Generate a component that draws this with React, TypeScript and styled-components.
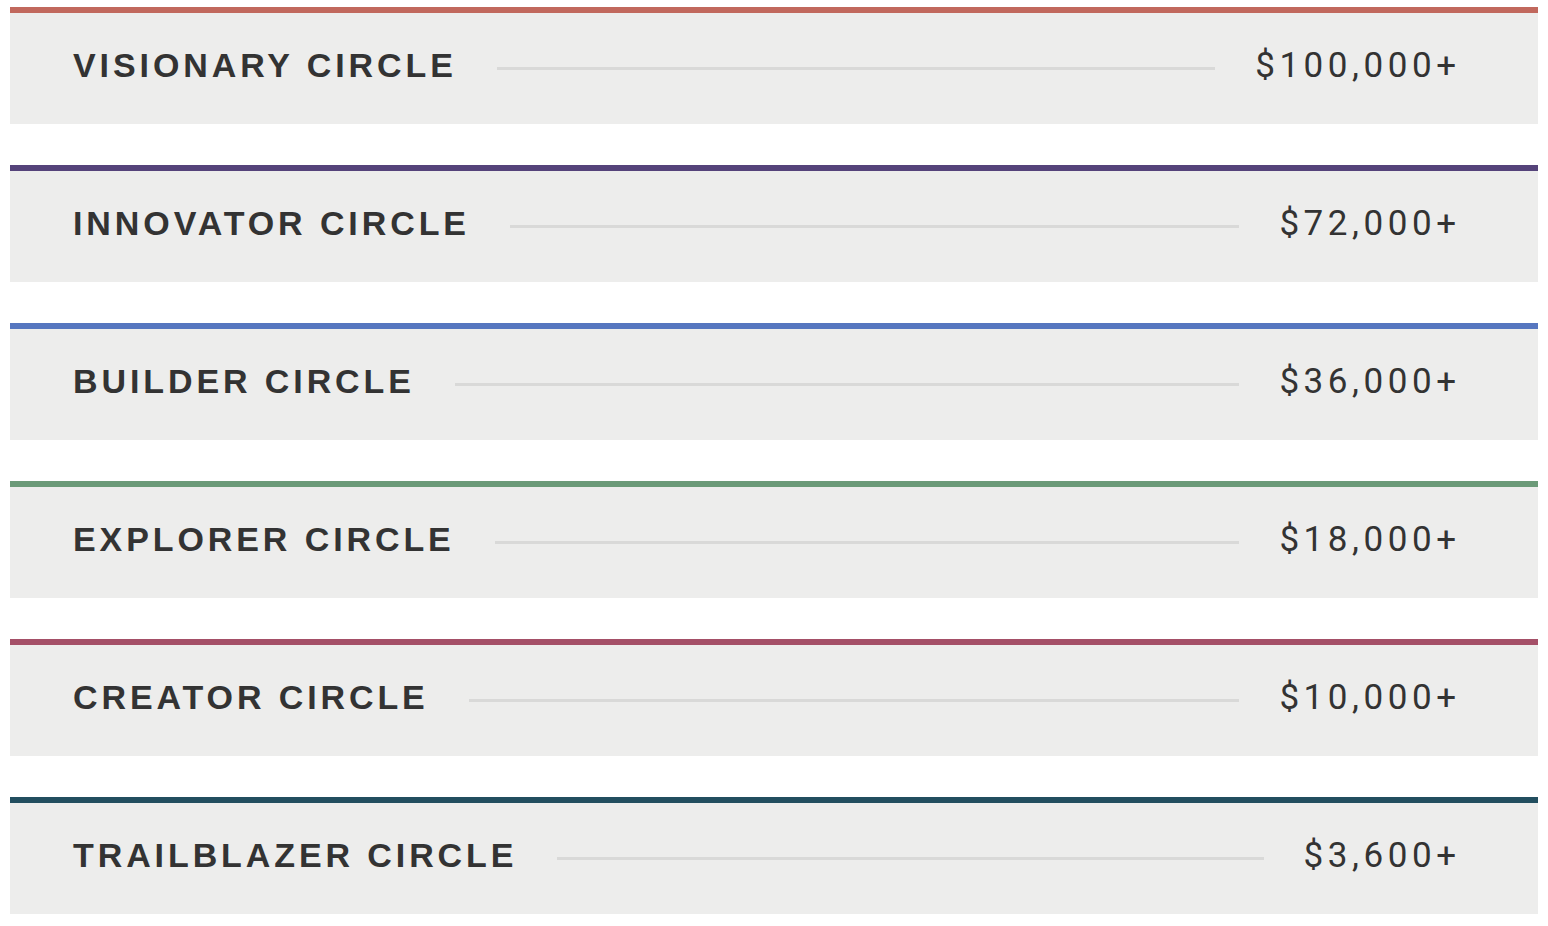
import React from 'react';
import styled, { createGlobalStyle } from 'styled-components';

const GlobalStyle = createGlobalStyle`
    body {
        margin: 0;
        background: #ffffff;
    }
`;

const List = styled.section`
    display: flex;
    flex-direction: column;
    gap: 41px;
    padding: 7px 10px 0;
`;

const Tier = styled.div<{ $accent: string }>`
    display: flex;
    align-items: center;
    box-sizing: border-box;
    height: 117px;
    padding: 0 82px 6px 63px;
    background: #ededec;
    border-top: 6px solid ${(p) => p.$accent};
`;

const Name = styled.span`
    font-family: 'Liberation Sans', Arial, sans-serif;
    font-weight: 700;
    font-size: 34px;
    letter-spacing: 0.115em;
    color: #333333;
    white-space: nowrap;
`;

const Rule = styled.div`
    flex: 1;
    height: 3px;
    margin: 6px 40px 0 40px;
    background: #d9d9d8;
`;

const Amount = styled.span`
    font-family: Roboto, 'Liberation Sans', sans-serif;
    font-weight: 400;
    font-size: 35px;
    letter-spacing: 0.13em;
    margin-right: -0.13em;
    color: #333333;
    white-space: nowrap;
`;

const tiers = [
    { name: 'VISIONARY CIRCLE', amount: '$100,000+', accent: '#c1685d' },
    { name: 'INNOVATOR CIRCLE', amount: '$72,000+', accent: '#55437a' },
    { name: 'BUILDER CIRCLE', amount: '$36,000+', accent: '#5676bf' },
    { name: 'EXPLORER CIRCLE', amount: '$18,000+', accent: '#6b9a78' },
    { name: 'CREATOR CIRCLE', amount: '$10,000+', accent: '#a44f67' },
    { name: 'TRAILBLAZER CIRCLE', amount: '$3,600+', accent: '#224e5f' },
];

const App = () => {
    return (
        <>
            <GlobalStyle />
            <List>
                {tiers.map((t) => (
                    <Tier key={t.name} $accent={t.accent}>
                        <Name>{t.name}</Name>
                        <Rule />
                        <Amount>{t.amount}</Amount>
                    </Tier>
                ))}
            </List>
        </>
    );
};

export default App;
